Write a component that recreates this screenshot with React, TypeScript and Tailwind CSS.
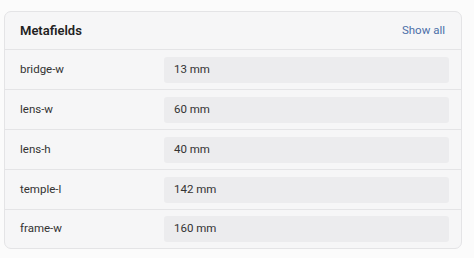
export default function App() {
  const rows = [
    { key: "bridge-w", value: "13 mm" },
    { key: "lens-w", value: "60 mm" },
    { key: "lens-h", value: "40 mm" },
    { key: "temple-l", value: "142 mm" },
    { key: "frame-w", value: "160 mm" },
  ];

  return (
    <div
      className="w-[474px] h-[258px] bg-[#fbfbfb] pt-[11px] pl-[4px] pr-[12px]"
      style={{ fontFamily: "Roboto, 'Liberation Sans', sans-serif" }}
    >
      <div className="bg-[#f6f6f7] border border-[#e4e4e6] rounded-[7px] overflow-hidden">
        <div className="h-[38px] flex items-center justify-between pl-[15px] pr-[16px] border-b border-[#e4e4e6]">
          <span className="text-[13px] font-semibold text-[#222]">Metafields</span>
          <span className="text-[11.5px] text-[#4b6fa8]">Show all</span>
        </div>
        {rows.map((r, i) => (
          <div
            key={r.key}
            className={`flex items-center pl-[15px] pr-[12px] ${
              i < rows.length - 1 ? "h-[40px] border-b border-[#e4e4e6]" : "h-[38px]"
            }`}
          >
            <span className="w-[144px] text-[11.5px] text-[#333]">{r.key}</span>
            <div className="flex-1 h-[26px] bg-[#ececee] rounded-[3px] flex items-center pl-[10px] text-[11.5px] text-[#333]">
              {r.value}
            </div>
          </div>
        ))}
      </div>
    </div>
  );
}
